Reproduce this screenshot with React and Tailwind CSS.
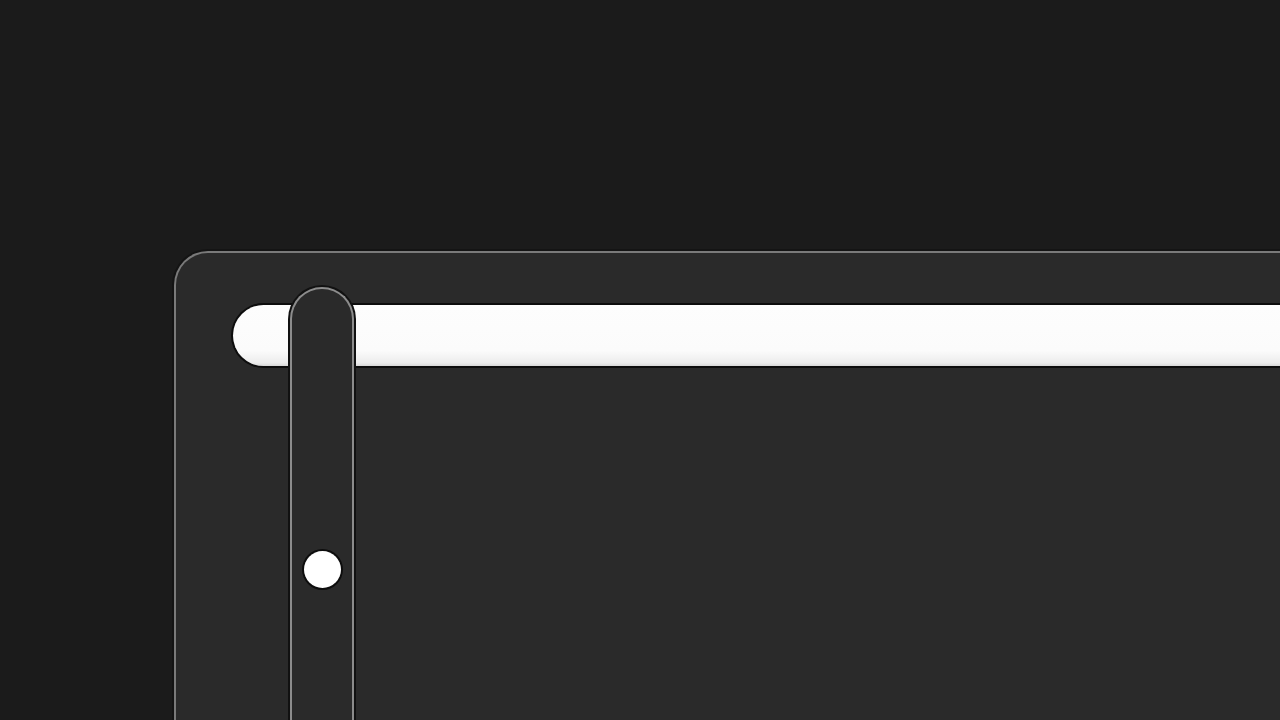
import React from "react";

export default function App() {
  return (
    <div className="relative h-[720px] w-[1280px] overflow-hidden bg-[#1b1b1b]">
      <div className="ml-[174px] mt-[251px] h-[520px] rounded-tl-[34px] border-l-2 border-t-2 border-[#7a7a7a] bg-[#2a2a2a] shadow-[0_0_0_2px_#141414] relative">
        <div className="ml-[57px] mt-[52px] h-[61px] rounded-l-full bg-[linear-gradient(to_bottom,#fdfdfd_0%,#fbfbfb_75%,#ececec_95%,#d8d8d8_100%)] shadow-[0_0_0_2px_#0d0d0d]" />
        <div className="absolute left-[114px] top-[34px] bottom-[-20px] w-[64px] rounded-t-full border-2 border-b-0 border-[#8c8c8c] bg-[#2a2a2a] shadow-[0_0_0_2px_#111111] flex flex-col items-center">
          <div className="mt-[262px] h-[37px] w-[37px] rounded-full bg-white shadow-[0_0_0_2px_#0d0d0d]" />
        </div>
      </div>
    </div>
  );
}
